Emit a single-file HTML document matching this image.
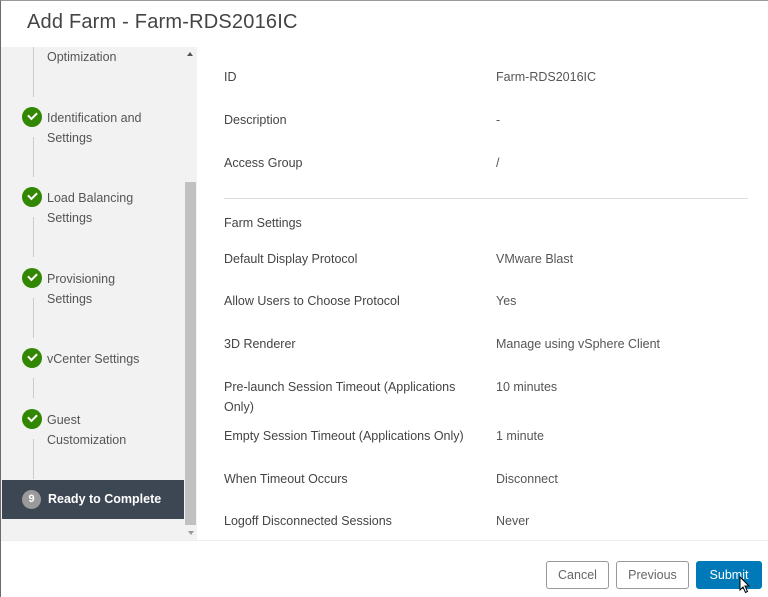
<!DOCTYPE html>
<html><head><style>
*{margin:0;padding:0;box-sizing:border-box}
body{width:768px;height:597px;overflow:hidden;background:#fff;font-family:"Liberation Sans",sans-serif;position:relative;color:#333}
.frame{position:absolute;left:0;top:0;width:768px;height:597px;border-left:1px solid #6b6b6b;border-top:1px solid #9a9a9a}
h1{position:absolute;left:27px;top:11px;font-size:20px;font-weight:normal;color:#444;letter-spacing:0.2px}
.side{position:absolute;left:1px;top:47px;width:196px;height:493px;background:#f2f2f2;overflow:hidden}
.vl{position:absolute;left:32px;width:1px;background:#ccc}
.ck{position:absolute;left:21px;width:20px;height:20px;border-radius:50%;background:#318700}
.ck:after{content:"";position:absolute;left:6px;top:5px;width:7px;height:4px;border-left:2px solid #fff;border-bottom:2px solid #fff;transform:rotate(-45deg)}
.st{position:absolute;left:46px;font-size:12.5px;line-height:20px;color:#555}
.cur{position:absolute;left:1px;top:433px;width:182px;height:39px;background:#3d4754}
.cur .n{position:absolute;left:20px;top:10px;width:19px;height:19px;border-radius:50%;background:#9a9a9a;color:#fff;font-size:11px;font-weight:bold;text-align:center;line-height:19px}
.cur .t{position:absolute;left:46px;top:12px;color:#fff;font-weight:bold;font-size:12.5px}
.sb{position:absolute;left:184px;top:135px;width:11px;height:343px;background:#c1c1c1}
.lab{position:absolute;left:224px;font-size:12.5px;line-height:20px;color:#444}
.val{position:absolute;left:496px;font-size:12.5px;line-height:20px;color:#555}
.sep{position:absolute;left:224px;top:198px;width:524px;height:1px;background:#ddd}
.foot{position:absolute;left:1px;top:540px;width:767px;height:1px;background:#eee}
.btn{position:absolute;top:561px;height:28px;border:1px solid #999;border-radius:3px;background:#fff;font-size:12.5px;color:#666;text-align:center;line-height:26px}
</style></head><body>
<div class="frame"></div>
<h1>Add Farm - Farm-RDS2016IC</h1>
<div class="side">
<div class="vl" style="top:0;height:50px"></div>
<div class="st" style="top:0">Optimization</div>
<div style="position:absolute;left:186px;top:5px;width:0;height:0;border-left:3px solid transparent;border-right:3px solid transparent;border-bottom:4px solid #555"></div>
<div class="ck" style="top:60px"></div>
<div class="st" style="top:61px">Identification and<br>Settings</div>
<div class="vl" style="top:90px;height:40px"></div>
<div class="ck" style="top:140px"></div>
<div class="st" style="top:141px">Load Balancing<br>Settings</div>
<div class="vl" style="top:170px;height:40px"></div>
<div class="ck" style="top:221px"></div>
<div class="st" style="top:222px">Provisioning<br>Settings</div>
<div class="vl" style="top:251px;height:40px"></div>
<div class="ck" style="top:301px"></div>
<div class="st" style="top:302px">vCenter Settings</div>
<div class="vl" style="top:331px;height:20px"></div>
<div class="ck" style="top:362px"></div>
<div class="st" style="top:363px">Guest<br>Customization</div>
<div class="vl" style="top:392px;height:40px"></div>
<div class="cur"><div class="n">9</div><div class="t">Ready to Complete</div></div>
<div class="sb"></div>
<div style="position:absolute;left:187px;top:484px;width:0;height:0;border-left:3px solid transparent;border-right:3px solid transparent;border-top:4px solid #999"></div>
</div>
<div class="lab" style="top:67px">ID</div><div class="val" style="top:67px">Farm-RDS2016IC</div>
<div class="lab" style="top:110px">Description</div><div class="val" style="top:110px">-</div>
<div class="lab" style="top:153px">Access Group</div><div class="val" style="top:153px">/</div>
<div class="sep"></div>
<div class="lab" style="top:213px">Farm Settings</div>
<div class="lab" style="top:249px">Default Display Protocol</div><div class="val" style="top:249px">VMware Blast</div>
<div class="lab" style="top:291px">Allow Users to Choose Protocol</div><div class="val" style="top:291px">Yes</div>
<div class="lab" style="top:334px">3D Renderer</div><div class="val" style="top:334px">Manage using vSphere Client</div>
<div class="lab" style="top:377px">Pre-launch Session Timeout (Applications<br>Only)</div><div class="val" style="top:377px">10 minutes</div>
<div class="lab" style="top:426px">Empty Session Timeout (Applications Only)</div><div class="val" style="top:426px">1 minute</div>
<div class="lab" style="top:469px">When Timeout Occurs</div><div class="val" style="top:469px">Disconnect</div>
<div class="lab" style="top:511px">Logoff Disconnected Sessions</div><div class="val" style="top:511px">Never</div>
<div class="foot"></div>
<div class="btn" style="left:546px;width:63px">Cancel</div>
<div class="btn" style="left:616px;width:73px">Previous</div>
<div class="btn" style="left:696px;width:66px;background:#0079b8;border-color:#0079b8;color:#fff">Submit</div>
<svg style="position:absolute;left:739px;top:576px" width="14" height="18" viewBox="0 0 14 18"><path d="M1 1 L1 14 L4 11 L6.5 16.5 L8.5 15.5 L6 10 L10 10 Z" fill="#fff" stroke="#000" stroke-width="1"/></svg>
</body></html>
